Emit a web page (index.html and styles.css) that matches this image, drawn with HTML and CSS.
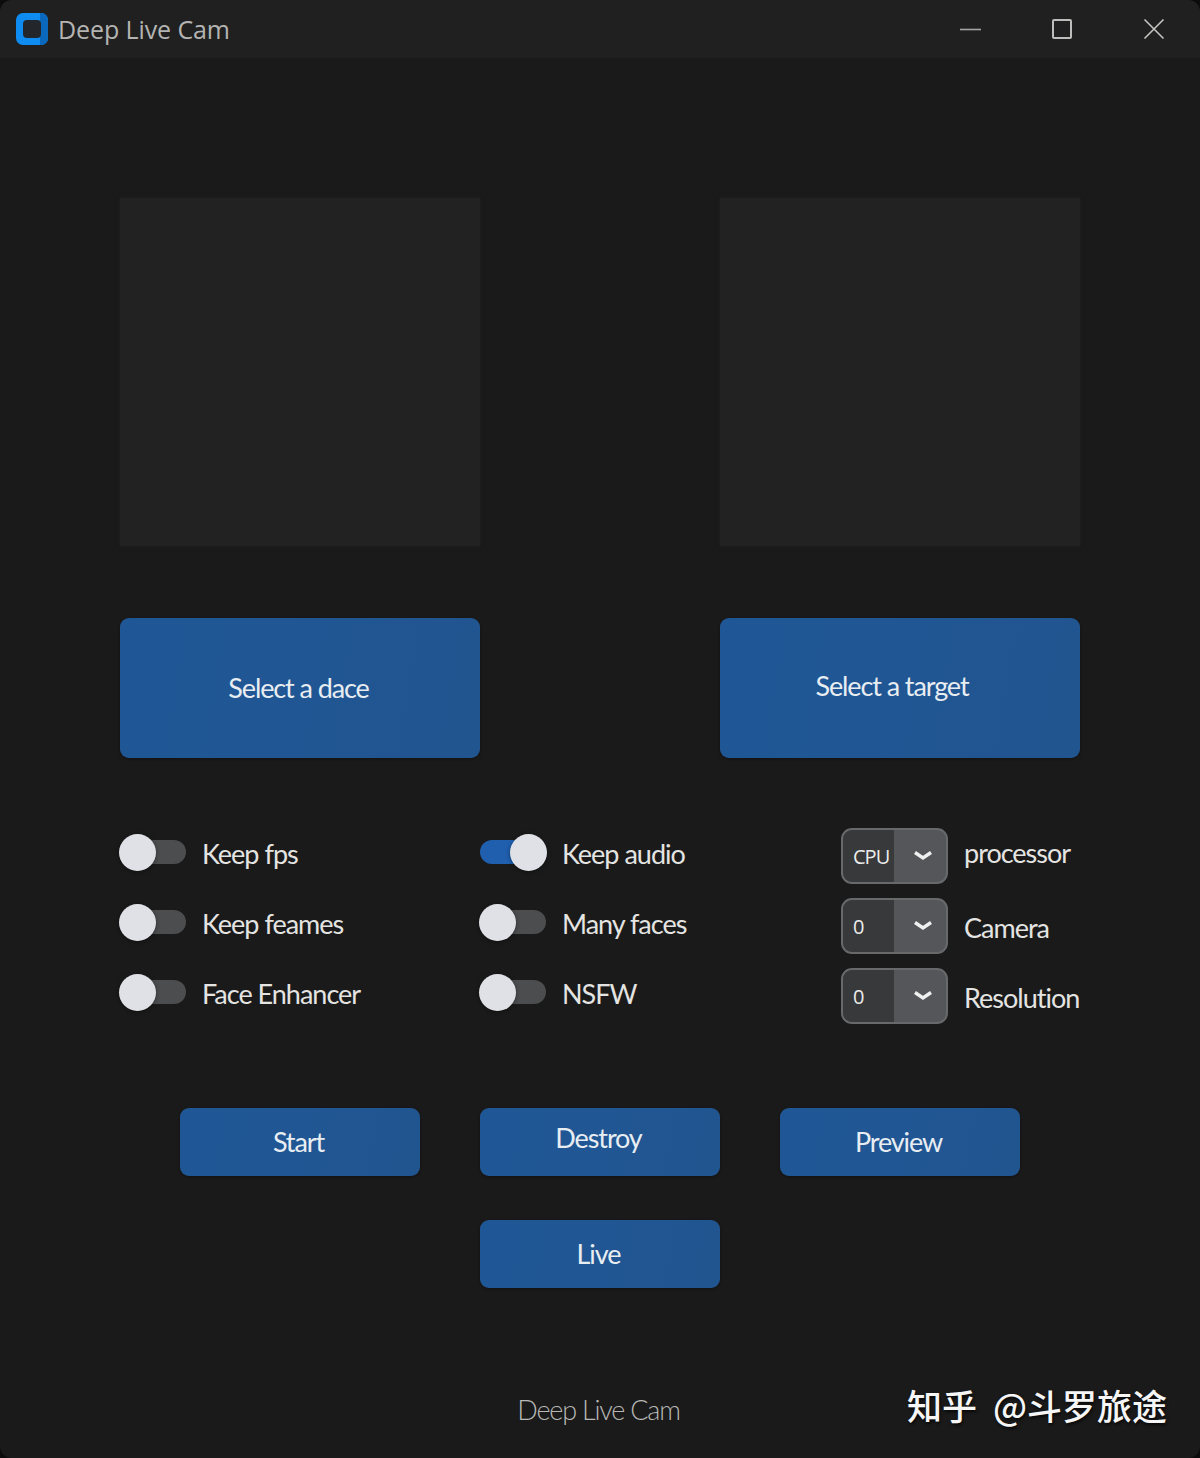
FILE: index.html
```html
<!DOCTYPE html>
<html lang="en">
<head>
<meta charset="utf-8">
<title>Deep Live Cam</title>
<link rel="stylesheet" href="styles.css">
</head>
<body>
<div class="window">
  <header class="titlebar">
    <svg class="app-icon" width="34" height="34" viewBox="0 0 34 34"><rect x="1" y="1" width="32" height="32" rx="7" fill="#0f8cf2"/><path d="M25 1h1a7 7 0 0 1 7 7v18a7 7 0 0 1-7 7h-1z" fill="#0a69bd"/><rect x="8" y="8" width="18" height="18" rx="4" fill="#23272b"/></svg>
    <span class="app-title">Deep Live Cam</span>
    <div class="win-controls">
      <svg width="24" height="24" viewBox="0 0 24 24"><path d="M2 12.500h21" stroke="#a5a5a3" stroke-width="1.600" fill="none"/></svg>
      <svg width="24" height="24" viewBox="0 0 24 24"><rect x="3" y="3" width="18" height="18" rx="1" stroke="#bdbdbb" stroke-width="2" fill="none"/></svg>
      <svg width="24" height="24" viewBox="0 0 24 24"><path d="M2.500 2.500l19 19M21.500 2.500l-19 19" stroke="#c4c4c2" stroke-width="1.600" fill="none"/></svg>
    </div>
  </header>
  <main class="content">
    <section class="previews">
      <div class="preview"></div>
      <div class="preview"></div>
    </section>
    <section class="selects">
      <button class="btn btn-large">Select a dace</button>
      <button class="btn btn-large btn-target">Select a target</button>
    </section>
    <section class="options">
      <div class="option"><span class="toggle"><span class="knob"></span></span><span class="opt-label">Keep fps</span></div>
      <div class="option"><span class="toggle on"><span class="knob"></span></span><span class="opt-label">Keep audio</span></div>
      <div class="option option-select"><span class="dropdown"><span class="dd-value">CPU</span><span class="dd-arrow"><svg width="20" height="12" viewBox="0 0 20 12"><path d="M2 2.500l8 5.500 8-5.500" stroke="#f0f0f0" stroke-width="3.400" fill="none"/></svg></span></span><span class="opt-label label-up">processor</span></div>
      <div class="option"><span class="toggle"><span class="knob"></span></span><span class="opt-label">Keep feames</span></div>
      <div class="option"><span class="toggle"><span class="knob"></span></span><span class="opt-label">Many faces</span></div>
      <div class="option option-select"><span class="dropdown"><span class="dd-value">0</span><span class="dd-arrow"><svg width="20" height="12" viewBox="0 0 20 12"><path d="M2 2.500l8 5.500 8-5.500" stroke="#f0f0f0" stroke-width="3.400" fill="none"/></svg></span></span><span class="opt-label">Camera</span></div>
      <div class="option"><span class="toggle"><span class="knob"></span></span><span class="opt-label">Face Enhancer</span></div>
      <div class="option"><span class="toggle"><span class="knob"></span></span><span class="opt-label">NSFW</span></div>
      <div class="option option-select"><span class="dropdown"><span class="dd-value">0</span><span class="dd-arrow"><svg width="20" height="12" viewBox="0 0 20 12"><path d="M2 2.500l8 5.500 8-5.500" stroke="#f0f0f0" stroke-width="3.400" fill="none"/></svg></span></span><span class="opt-label">Resolution</span></div>
    </section>
    <section class="actions">
      <button class="btn">Start</button>
      <button class="btn btn-up">Destroy</button>
      <button class="btn">Preview</button>
    </section>
    <section class="actions actions-live">
      <button class="btn">Live</button>
    </section>
    <footer class="footer">Deep Live Cam</footer>
  </main>
  <div class="watermark">知乎 @斗罗旅途</div>
</div>
</body>
</html>
```

FILE: styles.css
```css
* { box-sizing: border-box; }
html, body { margin: 0; padding: 0; background: #0c0c0c; }
body { width: 1200px; height: 1458px; overflow: hidden; font-family: Lato, "Liberation Sans", sans-serif; }

.window {
  position: relative;
  width: 1200px;
  height: 1458px;
  background: #1a1a1a;
  border-radius: 12px;
  overflow: hidden;
  display: flex;
  flex-direction: column;
}

.titlebar {
  height: 58px;
  flex: none;
  background: #202020;
  display: flex;
  align-items: center;
  padding-left: 15px;
}
.app-icon { flex: none; }
.app-title {
  margin-left: 9px;
  font-family: "Open Sans", sans-serif;
  font-size: 25px;
  color: #b4b4b2;
  letter-spacing: -0.1px;
}
.win-controls {
  margin-left: auto;
  margin-right: 34px;
  display: flex;
  gap: 68px;
}

.content {
  flex: 1;
  padding: 140px 120px 0;
  display: flex;
  flex-direction: column;
}

.previews, .selects {
  display: flex;
  justify-content: space-between;
}
.preview {
  width: 360px;
  height: 348px;
  background: #222222;
  box-shadow: 0 0 4px rgba(34, 34, 34, 0.8);
}
.selects { margin-top: 72px; }

.btn {
  width: 240px;
  height: 68px;
  border: 0;
  border-radius: 9px;
  background: linear-gradient(100deg, #1f5796, #215590);
  box-shadow: 0 1px 3px rgba(0, 0, 0, 0.35);
  color: #e8edf2;
  font-family: Lato, sans-serif;
  font-size: 27px;
  letter-spacing: -1.1px;
  padding: 0 3px 2px 0;
}
.btn-large { width: 360px; height: 140px; padding-bottom: 1px; }
.btn-target { padding: 0 16px 6px 0; }
.btn-up { padding-bottom: 9px; }

.options {
  margin-top: 59px;
  display: grid;
  grid-template-columns: 360px 360px 1fr;
  grid-auto-rows: 70px;
}
.option {
  display: flex;
  align-items: center;
  height: 70px;
}
.option-select { padding-left: 1px; padding-top: 8px; }

.toggle {
  position: relative;
  width: 66px;
  height: 24px;
  margin-right: 16px;
  border-radius: 12px;
  background: #4b4d4f;
  flex: none;
}
.toggle.on { background: #1f5fae; }
.knob {
  position: absolute;
  left: -1px;
  top: -6px;
  width: 37px;
  height: 37px;
  border-radius: 50%;
  background: #dfe1e6;
  box-shadow: 0 1px 4px rgba(0, 0, 0, 0.4);
}
.toggle.on .knob { left: 30px; }

.opt-label {
  font-size: 27px;
  color: #e4e4e2;
  letter-spacing: -1px;
  position: relative;
  top: 1px;
}
.label-up { top: -4px; }

.dropdown {
  width: 107px;
  height: 56px;
  margin-right: 16px;
  border: 2px solid #67696b;
  border-radius: 11px;
  background: #54565a;
  display: flex;
  overflow: hidden;
  flex: none;
}
.dd-value {
  width: 51px;
  background: #38393b;
  color: #ececec;
  font-family: "Open Sans", sans-serif;
  font-size: 20px;
  letter-spacing: -1px;
  display: flex;
  align-items: center;
  padding-left: 10px;
}
.dd-arrow {
  flex: 1;
  display: flex;
  align-items: center;
  justify-content: center;
  padding-left: 5px;
}

.actions {
  margin-top: 81px;
  display: flex;
  justify-content: center;
  gap: 60px;
}
.actions-live { margin-top: 44px; }

.footer {
  margin-top: 105px;
  padding-right: 3px;
  text-align: center;
  font-size: 27px;
  font-weight: 300;
  letter-spacing: -1.2px;
  color: #b8b8b6;
}

.watermark {
  position: absolute;
  left: 907px;
  top: 1383px;
  font-family: "Noto Sans CJK SC", sans-serif;
  font-size: 35px;
  font-weight: 500;
  line-height: 44px;
  word-spacing: 8px;
  color: #f6f6f6;
  white-space: nowrap;
  text-shadow: 1px 2px 3px rgba(0, 0, 0, 0.7);
}
```
